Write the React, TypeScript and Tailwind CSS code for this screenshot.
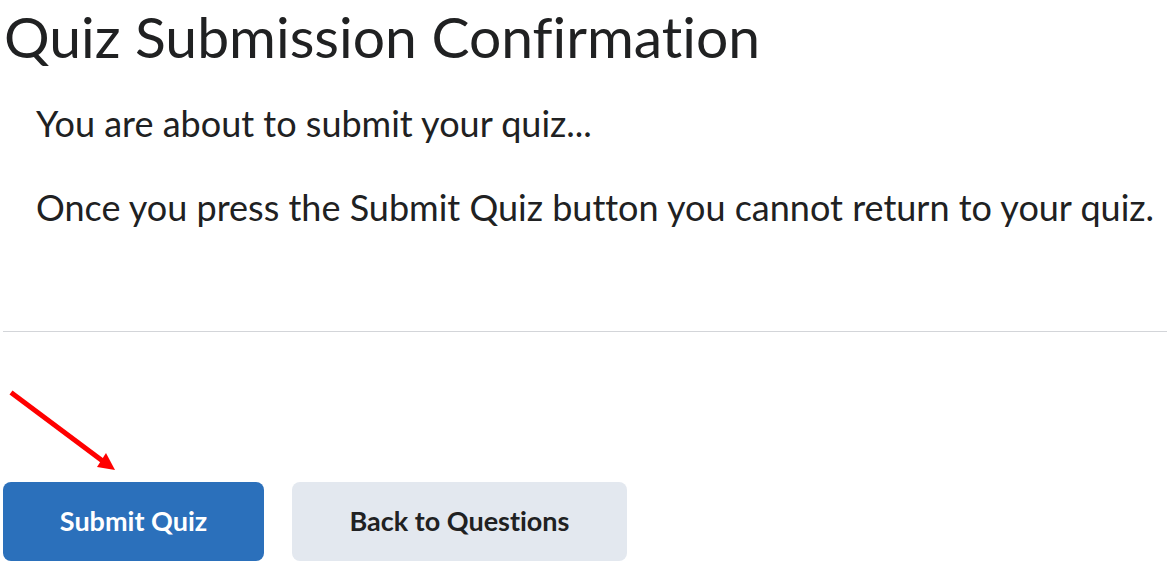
import React from 'react';

const Arrow: React.FC = () => (
  <svg className="absolute left-0 top-[-100px] pointer-events-none" width="130" height="100" viewBox="0 0 130 100">
    <line x1="13" y1="12" x2="104" y2="80" stroke="#ff0000" strokeWidth="5" strokeLinecap="square" />
    <polygon points="115,88 97,85 106,71" fill="#ff0000" />
  </svg>
);

const App: React.FC = () => {
  return (
    <div
      className="w-[1170px] h-[569px] bg-white overflow-hidden text-[#202122] [font-variant-ligatures:none]"
      style={{ fontFamily: 'Lato, "Noto Sans", sans-serif' }}
    >
      <h1 className="pl-[4px] pt-[2px] text-[57px] leading-[68px] font-normal">Quiz Submission Confirmation</h1>
      <div className="pl-[36px] pt-[32px] text-[36px] leading-[42px]">
        <p>You are about to submit your quiz...</p>
        <p className="mt-[42px]">Once you press the Submit Quiz button you cannot return to your quiz.</p>
      </div>
      <div className="mx-[3px] mt-[103px] h-px bg-[#d3d5d9]"></div>
      <div className="relative flex gap-[28px] pl-[3px] mt-[150px]">
        <Arrow />
        <button className="w-[261px] h-[79px] rounded-[8px] bg-[#2b70bb] text-white text-[27px] font-bold">Submit Quiz</button>
        <button className="w-[335px] h-[79px] rounded-[8px] bg-[#e3e8ef] text-[#202122] text-[27px] font-bold">Back to Questions</button>
      </div>
    </div>
  );
};

export default App;
